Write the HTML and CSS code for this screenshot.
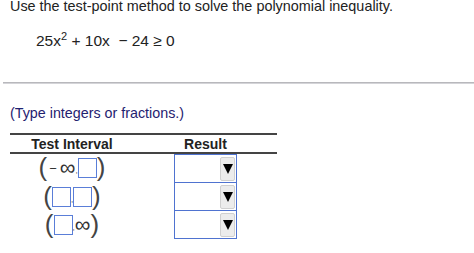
FILE: index.html
```html
<!DOCTYPE html>
<html>
  <head>
    <link rel="stylesheet" href="styles.css">
  </head>
  <body>
    <div class="page">
      <p class="prompt">Use the test-point method to solve the polynomial inequality.</p>
      <p class="equation">25x<sup>2</sup> + 10x &nbsp;&minus; 24 &ge; 0</p>
      <div class="rule"></div>
      <p class="hint">(Type integers or fractions.)</p>

      <div class="answer">
        <div class="head">Test Interval</div>
        <div class="head">Result</div>

        <div class="interval">
          <span class="paren">(</span><span class="minus">&minus;</span><span class="inf">&infin;</span><span class="comma">,</span><span class="box"></span><span class="paren">)</span>
        </div>
        <div class="result"><div class="select"><span class="arrow"><i class="tri"></i></span></div></div>

        <div class="interval">
          <span class="paren">(</span><span class="box"></span><span class="comma">,</span><span class="box"></span><span class="paren">)</span>
        </div>
        <div class="result"><div class="select"><span class="arrow"><i class="tri"></i></span></div></div>

        <div class="interval">
          <span class="paren">(</span><span class="box"></span><span class="comma">,</span><span class="inf">&infin;</span><span class="paren">)</span>
        </div>
        <div class="result"><div class="select"><span class="arrow"><i class="tri"></i></span></div></div>
      </div>
    </div>
  </body>
</html>
```

FILE: styles.css
```css
body{
  margin: 0;
  background: #fff;
  font-family: "Liberation Sans", Arial, sans-serif;
  color: #222;
}
.prompt{
  margin: -2px 0 0 10px;
  font-size: 14.4px;
  line-height: 17px;
  color: #222;
}
.equation{
  margin: 17px 0 0 36px;
  font-size: 15.5px;
  line-height: 18px;
}
.equation sup{
  font-size: 11px;
  line-height: 0;
}
.rule{
  margin: 32px 0 0 3px;
  height: 1px;
  background: #b8b8bc;
  border-bottom: 1px solid #d4d4d8;
}
.hint{
  margin: 21px 0 0 10px;
  font-size: 14.3px;
  line-height: 16px;
  color: #1f2270;
}
.answer{
  margin: 12px 0 0 10px;
  width: 267px;
  display: grid;
  grid-template-columns: 124px 143px;
  border-top: 2px solid #444;
}
.head{
  font-weight: bold;
  font-size: 14px;
  line-height: 16px;
  text-align: center;
  padding: 1px 0 0;
  border-bottom: 2px solid #444;
}
.interval{
  height: 28px;
  display: flex;
  align-items: center;
  justify-content: center;
  color: #333;
}
.paren{
  font-size: 26px;
  line-height: 26px;
  color: #444;
  margin-top: -3px;
}
.minus{
  font-size: 13px;
  margin: 0 3px 0 2px;
}
.inf{
  font-size: 22px;
  line-height: 20px;
  margin-top: -1px;
}
.comma{
  font-size: 8px;
  align-self: flex-end;
  margin-bottom: 7px;
}
.box{
  width: 17px;
  height: 18px;
  border: 1px solid #5a7ed8;
  background: #fff;
}
.result{
  display: flex;
  justify-content: center;
}
.select{
  width: 61px;
  height: 27px;
  border: 1px solid #4f73d0;
  margin-top: -1px;
  display: flex;
  justify-content: flex-end;
  align-items: center;
  background: #fff;
}
.result:nth-child(4) .select{
  margin-top: 0;
}
.arrow{
  width: 15px;
  height: 24px;
  margin-right: 1px;
  background: #ececec;
  border: 1px solid #d0d0d0;
  border-radius: 2px;
  box-sizing: border-box;
  display: flex;
  align-items: center;
  justify-content: center;
}
.tri{
  width: 0;
  height: 0;
  border-left: 5px solid transparent;
  border-right: 5px solid transparent;
  border-top: 10px solid #000;
}
```
